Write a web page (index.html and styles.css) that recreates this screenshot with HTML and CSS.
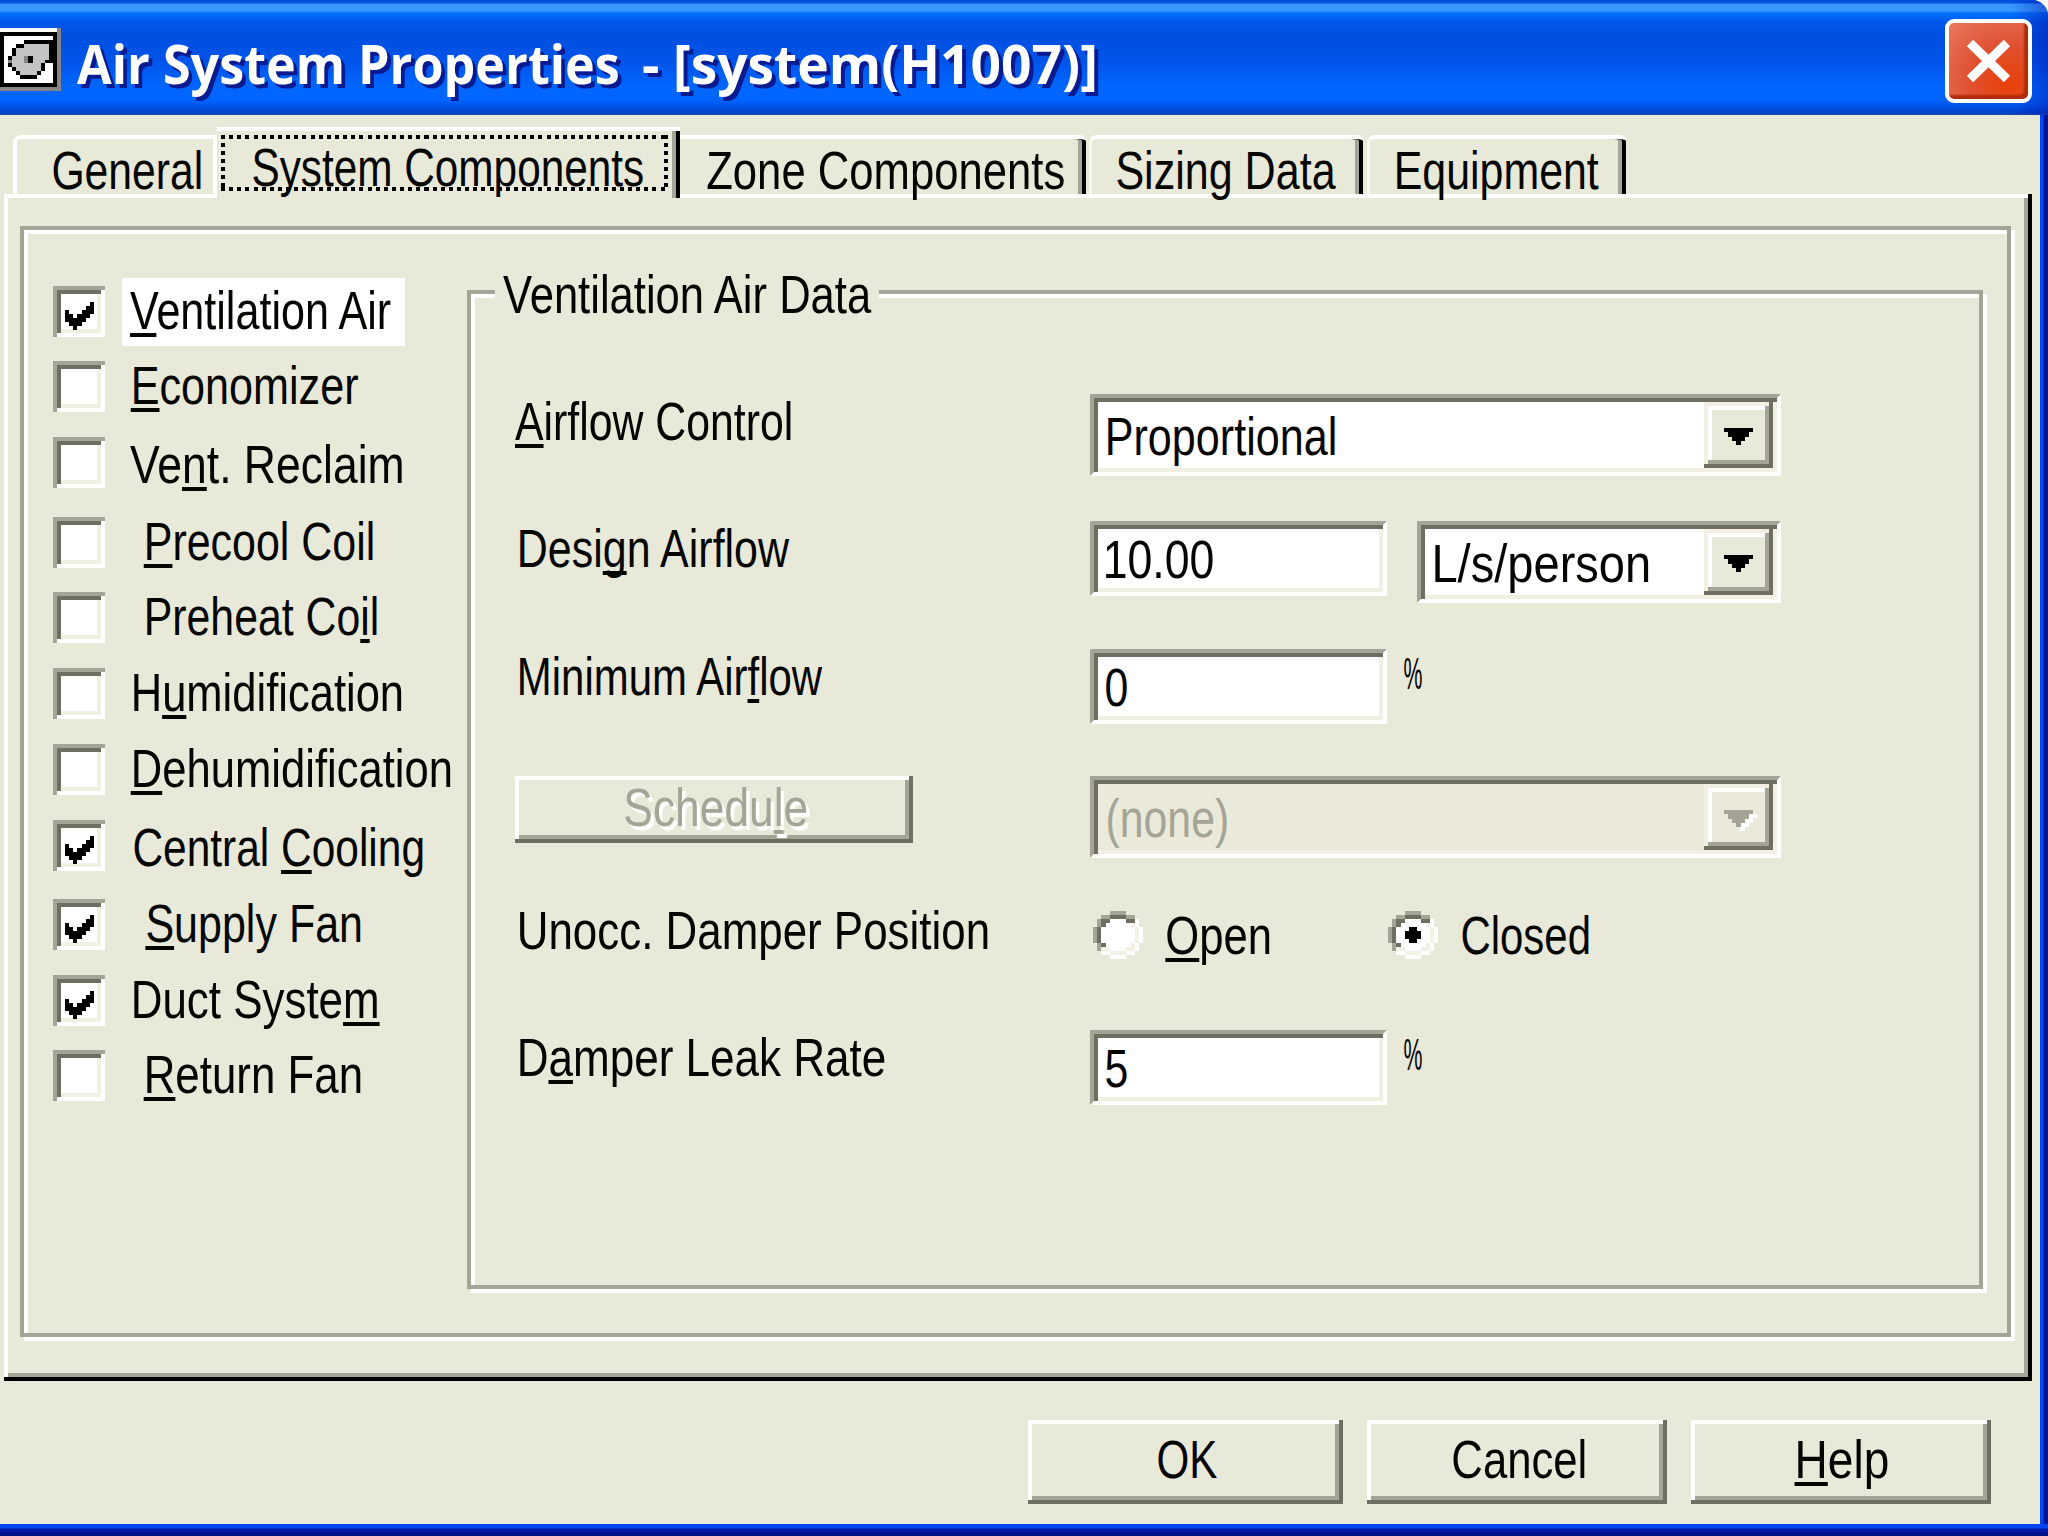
FILE: index.html
```
<!DOCTYPE html>
<html lang="en">
<head>
<meta charset="utf-8">
<title>Air System Properties - [system(H1007)]</title>
<link rel="stylesheet" href="styles.css">
</head>
<body>
<svg width="0" height="0" class="defs" aria-hidden="true">
  <symbol id="tick" viewBox="0 0 7 7" preserveAspectRatio="none"><path d="M0 2h1v1h1v1h1v-1h1v-1h1v-1h1v-1h1v3h-1v1h-1v1h-1v1h-1v1h-1v-1h-1v-1h-1z"/></symbol>
  <symbol id="arrow" viewBox="0 0 7 4" preserveAspectRatio="none"><path d="M0 0h7v1h-1v1h-1v1h-1v1h-1v-1h-1v-1h-1v-1h-1z"/></symbol>
  <symbol id="ring" viewBox="0 0 12 12" preserveAspectRatio="none">
    <path fill="#fff" d="M4 2h4v1h1v1h1v4h-1v1h-1v1h-4v-1h-1v-1h-1v-4h1v-1h1z"/>
    <path fill="#a5a597" d="M4 0h4v1h-4zM2 1h2v1h-2zM8 1h2v1h-2zM1 2h1v2h-1zM0 4h1v4h-1zM1 8h1v2h-1z"/>
    <path fill="#6f6f61" d="M4 1h4v1h-4zM2 2h2v1h-2zM8 2h2v1h-2zM2 3h1v1h-1zM1 4h1v4h-1zM2 8h1v1h-1z"/>
    <path fill="#f3f1e6" d="M9 3h1v1h-1zM10 4h1v4h-1zM9 8h1v1h-1zM2 9h2v1h-2zM8 9h2v1h-2zM4 10h4v1h-4z"/>
    <path fill="#fff" d="M10 2h1v2h-1zM11 4h1v4h-1zM10 8h1v2h-1zM2 10h2v1h-2zM8 10h2v1h-2zM4 11h4v1h-4z"/>
  </symbol>
</svg>
<div class="window">
  <header class="titlebar">
    <svg class="app-icon" viewBox="0 0 15 16" preserveAspectRatio="none" shape-rendering="crispEdges">
      <path fill="#85858a" d="M0 0h15v16H0z"/><path fill="#fff" d="M0 0h14v1H0z"/>
      <path d="M0 1h14v14H0z"/><path fill="#fff" d="M1 2h12v12H1z"/>
      <path fill="#c3c3c3" d="M6 4h6v4h-1v2h-1v1h-1v1h-4v-1h-1v-1h-1v-5h1v-1h2z"/>
      <path d="M6 3h7v6h-2v-1h1v-4h-6zM4 4h2v1h-2zM3 5h1v2h-1zM2 7h1v1h-1zM2 9h1v1h-1zM3 10h1v1h-1zM4 11h1v1h-1zM5 12h4v1h-4zM9 11h1v1h-1zM10 9h1v2h-1zM7 7h1v2h-1z"/>
      <path fill="#858585" d="M2 8h1v1h-1zM6 7h1v2h-1z"/>
    </svg>
    <h1 class="title"><span class="t" data-w="541">Air System Properties</span><span class="t" data-w="15">-</span><span class="t" data-w="419">[system(H1007)]</span></h1>
    <button class="close" aria-label="Close"><svg viewBox="0 0 45 44"><path d="M4 4L41 40M41 4L4 40" stroke="#fff" stroke-width="9"/></svg></button>
  </header>
  <main class="body">
    <nav class="tabs">
      <div class="tab tab-general"><span class="t" data-w="148">General</span></div>
      <div class="tab tab-system active"><div class="focus"><span class="t" data-w="390">System Components</span></div></div>
      <div class="tab tab-zone"><span class="t" data-w="357">Zone Components</span></div>
      <div class="tab tab-sizing"><span class="t" data-w="219">Sizing Data</span></div>
      <div class="tab tab-equip"><span class="t" data-w="202">Equipment</span></div>
    </nav>
    <section class="page">
      <div class="etched inner">
        <div class="checks">
          <label class="check"><i class="box"><svg><use href="#tick"/></svg></i><b class="hl"><span class="t" data-w="263"><u>V</u>entilation Air</span></b></label>
          <label class="check"><i class="box"></i><b class="e"><span class="t" data-w="224"><u>E</u>conomizer</span></b></label>
          <label class="check low"><i class="box"></i><b><span class="t" data-w="272">Ve<u>n</u>t. Reclaim</span></b></label>
          <label class="check"><i class="box"></i><b class="in"><span class="t" data-w="226"><u>P</u>recool Coil</span></b></label>
          <label class="check"><i class="box"></i><b class="in"><span class="t" data-w="230">Preheat Co<u>i</u>l</span></b></label>
          <label class="check"><i class="box"></i><b class="e"><span class="t" data-w="268">H<u>u</u>midification</span></b></label>
          <label class="check"><i class="box"></i><b class="e"><span class="t" data-w="317"><u>D</u>ehumidification</span></b></label>
          <label class="check low"><i class="box"><svg><use href="#tick"/></svg></i><b class="e"><span class="t" data-w="289">Central <u>C</u>ooling</span></b></label>
          <label class="check"><i class="box"><svg><use href="#tick"/></svg></i><b class="in"><span class="t" data-w="214"><u>S</u>upply Fan</span></b></label>
          <label class="check"><i class="box"><svg><use href="#tick"/></svg></i><b class="e"><span class="t" data-w="243">Duct Syste<u>m</u></span></b></label>
          <label class="check"><i class="box"></i><b class="in"><span class="t" data-w="214"><u>R</u>eturn Fan</span></b></label>
        </div>
        <div class="etched group">
          <div class="legend"><span class="t" data-w="371">Ventilation Air Data</span></div>
          <div class="form">
            <div class="row">
              <div class="label a"><span class="t" data-w="276"><u>A</u>irflow Control</span></div>
              <div class="combo wide"><span class="t" data-w="227">Proportional</span><div class="drop"><svg><use href="#arrow"/></svg></div></div>
            </div>
            <div class="row">
              <div class="label"><span class="t" data-w="272">Desi<u>g</u>n Airflow</span></div>
              <div class="edit"><span class="t" data-w="107">10.00</span></div>
              <div class="combo unit"><span class="t" data-w="214">L/s/person</span><div class="drop"><svg><use href="#arrow"/></svg></div></div>
            </div>
            <div class="row">
              <div class="label"><span class="t" data-w="305">Minimum Air<u>f</u>low</span></div>
              <div class="edit"><span class="t" data-w="21">0</span></div>
              <div class="pct"><span class="t" data-w="18">%</span></div>
            </div>
            <div class="row">
              <div class="label a"><div class="btn schedule"><span class="t" data-w="182">Schedu<u>l</u>e</span></div></div>
              <div class="combo wide disabled"><span class="t" data-w="119">(none)</span><div class="drop"><svg><use href="#arrow"/></svg></div></div>
            </div>
            <div class="row">
              <div class="label"><span class="t" data-w="468">Unocc. Damper Position</span></div>
              <div class="radio open"><svg class="ring"><use href="#ring"/></svg><span class="t" data-w="103"><u>O</u>pen</span></div>
              <div class="radio"><svg class="ring" viewBox="0 0 12 12" preserveAspectRatio="none" shape-rendering="crispEdges"><use href="#ring"/><path d="M5 4h2v1h1v2h-1v1h-2v-1h-1v-2h1z"/></svg><span class="t" data-w="127">Closed</span></div>
            </div>
            <div class="row">
              <div class="label"><span class="t" data-w="365">D<u>a</u>mper Leak Rate</span></div>
              <div class="edit"><span class="t" data-w="21">5</span></div>
              <div class="pct"><span class="t" data-w="18">%</span></div>
            </div>
          </div>
        </div>
      </div>
    </section>
    <footer class="buttons">
      <div class="btn ok"><span class="t" data-w="59">OK</span></div>
      <div class="btn cancel"><span class="t" data-w="132">Cancel</span></div>
      <div class="btn help"><span class="t" data-w="90"><u>H</u>elp</span></div>
    </footer>
  </main>
  <div class="bottom-edge"></div>
</div>
<script src="fit.js"></script>
</body>
</html>
```
FILE: fit.js
```
// Condense each label so that its ink fills the width given in data-w.
const ctx = document.createElement('canvas').getContext('2d');
document.querySelectorAll('.t').forEach(el => {
  const cs = getComputedStyle(el);
  ctx.font = cs.fontWeight + ' ' + cs.fontSize + ' ' + cs.fontFamily;
  const m = ctx.measureText(el.textContent);
  const ink = m.actualBoundingBoxRight + m.actualBoundingBoxLeft;
  const w = Number(el.dataset.w);
  const s = w / ink;
  el.style.width = w + 'px';
  el.style.transform = `translateX(${m.actualBoundingBoxLeft * s}px) scaleX(${s})`;
});
```
FILE: styles.css
```
* { box-sizing: border-box; }
body { margin: 0; background: #fff; }
.defs { position: absolute; }
.window {
  width: 2048px; height: 1536px; display: flex; flex-direction: column;
  background: linear-gradient(90deg, #0046f0 2043px, #001498 2044px); overflow: hidden;
  border-radius: 0 16px 0 0;
  font: 53px/55px "Liberation Sans", Arial, sans-serif; color: #050502;
}
.t { display: block; flex: none; white-space: nowrap; transform-origin: 0 0; }
u { text-decoration: underline; text-decoration-thickness: 4px; text-underline-offset: 4px; text-decoration-skip-ink: none; }

.titlebar {
  height: 115px; flex: none; display: flex; align-items: flex-start;
  background:
    linear-gradient(90deg, transparent 2012px, rgba(0,20,170,.45) 2048px),
    linear-gradient(#0050e0 0 3px, #3796ff 4px 11px, #0072ff 13px, #0058ea 22px, #0050e0 36px, #0054ea 62px, #0066ff 86px, #0066ff 100px, #0050e6 107px, #0040c4 113px, #1c50b0 115px);
}
.app-icon { width: 61px; height: 63px; margin-top: 28px; flex: none; }
.title {
  margin: 38px 0 0 16px; width: 1868px; flex: none; display: flex;
  font: 700 54px/50px "Open Sans", "Noto Sans", sans-serif; color: #fff;
  text-shadow: 4px 4px 0 #0a1a90;
}
.title .t:nth-child(2) { margin: 0 18px 0 25px; }
.close {
  margin: 19px 0 0; padding: 0; width: 87px; height: 84px; flex: none;
  display: grid; place-items: center;
  border: 4px solid #fff; border-radius: 9px;
  background: radial-gradient(circle at 75% 80%, #e84008 0, #e05030 45%, #e87860 100%);
  box-shadow: inset -4px -4px 2px #b02c08;
}
.close svg { width: 45px; height: 44px; }

.body {
  flex: none; width: 2040px; height: 1409px;
  background: #e9e9d9;
  padding: 12px 8px 0 4px; display: flex; flex-direction: column;
}
.bottom-edge { height: 12px; flex: none; background: linear-gradient(#0046f0 0 4px, #001aa8 5px, #000c80 12px); }

.tabs { display: flex; align-items: flex-end; height: 67px; padding-left: 9px; flex: none; }
.tab { height: 59px; padding-top: 4px; border-top: 4px solid #fff; position: relative; z-index: 1; }
.tab-general { width: 204px; height: 63px; padding-left: 36px; border-left: 4px solid #fff; border-right: 4px solid #fff; border-bottom: 4px solid #fff; border-radius: 8px 0 0 0; margin-bottom: -4px; }
.tab-system { width: 463px; height: 71px; padding: 4px 0 0 4px; margin-bottom: -4px; background: #e9e9d9; box-shadow: inset -4px 0 0 #000, inset -8px 0 0 #a5a597; }
.tab-system .focus {
  width: 447px; height: 56px; padding: 5px 0 0 32px;
  background:
    repeating-linear-gradient(90deg, #000 0 4px, transparent 4px 8.14px) 0 0/100% 4px no-repeat,
    repeating-linear-gradient(90deg, #000 0 4px, transparent 4px 8.14px) 0 100%/100% 4px no-repeat,
    repeating-linear-gradient(#000 0 4px, transparent 4px 8px) 0 0/4px 100% no-repeat,
    repeating-linear-gradient(#000 0 4px, transparent 4px 8px) 100% 0/4px 100% no-repeat;
}
.tab-zone, .tab-sizing, .tab-equip { box-shadow: inset -4px 0 0 #000, inset -8px 0 0 #a5a597; border-top-right-radius: 6px; }
.tab-zone { width: 406px; padding-left: 27px; }
.tab-sizing { width: 274px; margin-left: 3px; padding-left: 25px; border-left: 3px solid #f8f8f0; border-top-left-radius: 8px; }
.tab-equip { width: 259px; margin-left: 4px; padding-left: 27px; border-left: 3px solid #f8f8f0; border-top-left-radius: 8px; }

.page {
  height: 1187px; flex: none; width: 2028px;
  padding: 32px 0 0 16px;
  box-shadow: inset -4px -4px 0 #000, inset 4px 4px 0 #fff, inset -8px -8px 0 #a5a597;
}
.etched { border: 4px solid #a5a597; box-shadow: 4px 4px 0 #fff, inset 4px 4px 0 #fff; }
.inner { width: 1991px; height: 1111px; display: flex; }

.checks {
  width: 443px; flex: none; padding: 56px 0 0 29px;
  display: grid; align-content: start;
  grid-template-rows: 75px 76px 80px 75px 76px 76px 76px 79px 76px 75px 76px;
}
.check { display: flex; }
.check b { font-weight: 400; height: 50px; margin: -3px 0 0 24px; }
.check .e { margin-left: 28px; }
.check .in { margin-left: 41px; }
.check.low b { margin-top: 0; }
.check .hl { margin: -8px 0 0 16px; padding: 5px 12px 0 8px; height: 68px; background: #fff; }
.box {
  width: 52px; height: 51px; margin-right: 1px; flex: none; padding: 16px 0 0 12px; background: #fff;
  box-shadow: inset 4px 4px 0 #a5a597, inset -4px -4px 0 #fff, inset 8px 8px 0 #6f6f61, inset -8px -8px 0 #f1f0e3;
}
.box svg { display: block; width: 29px; height: 28px; shape-rendering: crispEdges; }

.group { width: 1516px; height: 999px; flex: none; margin-top: 60px; }
.legend { width: 384px; height: 50px; margin: -27px 0 0 24px; padding-left: 8px; background: #e9e9d9; }
.form { padding: 77px 0 0 44px; }
.row { display: flex; align-items: flex-start; height: 127.3px; }
.label { width: 570px; flex: none; margin-left: 5px; }
.label.a { width: 575px; margin-left: 0; }

.edit, .combo {
  background: #fff; flex: none; display: flex;
  border: 4px solid; border-color: #a5a597 #fff #fff #a5a597;
  box-shadow: inset 4px 4px 0 #6f6f61, inset -4px -4px 0 #f1f0e3;
}
.edit { width: 297px; height: 75px; padding: 7px 0 0 12px; }
.combo { height: 82px; padding: 4px 4px 4px 14px; justify-content: space-between; }
.combo .t { margin-top: 7px; }
.wide { width: 691px; }
.unit { width: 364px; margin-left: 30px; }
.drop {
  width: 69px; height: 66px; padding: 26px 0 0 20px; background: #e9e9d9;
  box-shadow: inset -4px -4px 0 #6f6f61, inset 4px 4px 0 #f1f0e3, inset -8px -8px 0 #a5a597, inset 8px 8px 0 #fff;
}
.drop svg { display: block; width: 29px; height: 17px; shape-rendering: crispEdges; }
.disabled { background: #ebe9da; color: #a5a597; }
.disabled .drop { background: #ebe9da; }
.disabled .drop svg { fill: #a5a597; filter: drop-shadow(4px 4px 0 #fff); }
.pct { margin: -3px 0 0 17px; font-size: 45px; }

.radio { display: flex; padding-top: 5px; margin-left: 3px; width: 292px; }
.ring { width: 50px; height: 48px; margin: 3px 24px 0 0; flex: none; shape-rendering: crispEdges; }

.btn {
  display: flex; justify-content: center; background: #e9e9d9;
  box-shadow: inset -4px -4px 0 #6f6f61, inset 4px 4px 0 #fff, inset -8px -8px 0 #a5a597;
}
.schedule { width: 398px; height: 67px; padding: 4px 0 0 4px; color: #a5a597; text-shadow: 4px 4px 0 #fff; }
.buttons { display: flex; flex: none; padding: 39px 0 0 1024px; }
.buttons .btn { height: 84px; padding: 12px 0 0 3px; }
.ok { width: 315px; }
.cancel { width: 300px; margin-left: 24px; }
.help { width: 300px; margin-left: 24px; }
```
